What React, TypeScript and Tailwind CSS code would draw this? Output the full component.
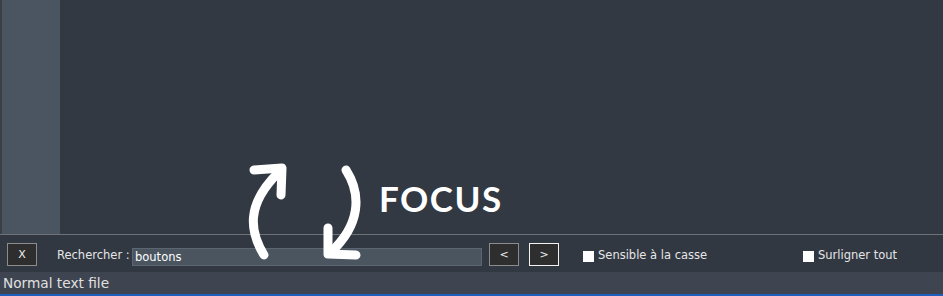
import React from "react";

export default function App() {
  return (
    <div className="relative w-[943px] h-[296px] overflow-hidden bg-[#323943] font-['DejaVu_Sans',sans-serif] text-[#e6e6e6]">
      <div className="flex h-[234px]">
        <div className="w-[2px] bg-[#3a3f48]" />
        <div className="w-[58px] bg-[#4b5562]" />
        <div className="flex-1 bg-[#323943]" />
      </div>
      <div className="h-px bg-[#6f7276]" />
      <div className="flex items-start h-[37px] bg-[#313842] text-[11.5px] leading-[15px]">
        <div className="ml-[7px] mt-[8px] w-[30px] h-[23px] border border-[#8c8c8c] bg-[#2e2e2e] flex items-center justify-center text-[11px] text-[#f0f0f0]">
          X
        </div>
        <div className="ml-[20px] mt-[13px] w-[75px] whitespace-nowrap">Rechercher :</div>
        <div className="mt-[13px] w-[350px] h-[18px] border border-[#5b6672] bg-[#4a5560] pl-[2px] pt-px text-white leading-[15px] whitespace-nowrap">
          boutons
        </div>
        <div className="ml-[7px] mt-[8px] w-[30px] h-[23px] border border-[#8c8c8c] bg-[#2e2e2e] flex items-center justify-center text-[11px] text-[#f0f0f0]">
          &lt;
        </div>
        <div className="ml-[10px] mt-[8px] w-[30px] h-[23px] border border-[#f2f2f2] bg-[#2e2e2e] flex items-center justify-center text-[11px] text-[#f0f0f0]">
          &gt;
        </div>
        <div className="ml-[24px] mt-[16px] w-[11px] h-[11px] bg-white" />
        <div className="ml-[4px] mt-[13px] w-[205px] whitespace-nowrap">Sensible à la casse</div>
        <div className="mt-[16px] w-[11px] h-[11px] bg-white" />
        <div className="ml-[4px] mt-[13px] whitespace-nowrap">Surligner tout</div>
      </div>
      <div className="h-[22px] bg-[#3e4450] pl-[3px] pt-px text-[13.7px] leading-[21px] text-[#e0e0e0] whitespace-nowrap">
        Normal text file
      </div>
      <div className="h-[2px] bg-[#1e5fbe]" />

      <svg
        className="absolute inset-0 pointer-events-none"
        width="943"
        height="296"
        viewBox="0 0 943 296"
        fill="none"
        stroke="white"
        strokeWidth="9"
        strokeLinecap="round"
        strokeLinejoin="round"
      >
        <path d="M 264 255 C 250 232, 245 205, 279 172" />
        <path d="M 254 170 L 282 168 L 281 195" />
        <path d="M 346 170 C 362 195, 360 225, 331 252" />
        <path d="M 328 228 L 328 254 L 356 255" />
      </svg>
      <div className="absolute left-[379px] top-[181px] font-['Lato',sans-serif] font-bold text-[35px] leading-[35px] tracking-[1.5px] text-white">
        FOCUS
      </div>
    </div>
  );
}
